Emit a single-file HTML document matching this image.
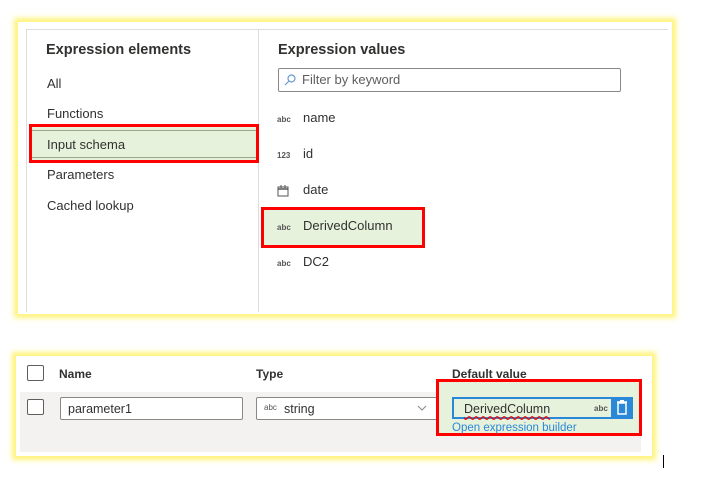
<!DOCTYPE html>
<html><head><meta charset="utf-8"><style>
*{box-sizing:border-box;margin:0;padding:0}
body{width:710px;height:484px;background:#fff;position:relative;overflow:hidden;font-family:"Liberation Sans",sans-serif;color:#323130}
.a{position:absolute}
.glow{box-shadow:0 0 5px 4px #fff37a;background:#fff}
.t{font-size:13px;white-space:nowrap;line-height:16px}
.h{font-size:14.5px;font-weight:bold;color:#323130}
.ic{font-size:8px;color:#555;font-weight:bold}
</style></head><body>
<div class="a glow" style="left:18px;top:22px;width:654px;height:292px"></div>
<div class="a" style="left:26px;top:29px;width:642px;height:1px;background:#ddd"></div>
<div class="a" style="left:26px;top:29px;width:1px;height:283px;background:#ddd"></div>
<div class="a" style="left:258px;top:30px;width:1px;height:282px;background:#ddd"></div>
<div class="a t h" style="left:46px;top:42px">Expression elements</div>
<div class="a t" style="left:47px;top:76px">All</div>
<div class="a t" style="left:47px;top:106px">Functions</div>
<div class="a" style="left:29px;top:124px;width:230px;height:39px;border:3px solid #f00;background:#e6f2dc"></div>
<div class="a" style="left:32px;top:130px;width:224px;height:28px;border-top:1px solid #9aa88a;border-bottom:1px solid #9aa88a"></div>
<div class="a t" style="left:47px;top:137px">Input schema</div>
<div class="a t" style="left:47px;top:167px">Parameters</div>
<div class="a t" style="left:47px;top:198px">Cached lookup</div>
<div class="a t h" style="left:278px;top:42px">Expression values</div>
<div class="a" style="left:278px;top:68px;width:343px;height:24px;border:1px solid #8a8886;border-radius:2px"></div>
<svg class="a" style="left:284px;top:74px" width="12" height="12"><circle cx="7.5" cy="4.5" r="3.5" fill="none" stroke="#6b9bd1" stroke-width="1.2"/><line x1="5" y1="7" x2="1" y2="11" stroke="#6b9bd1" stroke-width="1.2"/></svg>
<div class="a t" style="left:302px;top:72px;color:#605e5c">Filter by keyword</div>
<div class="a ic" style="left:277px;top:115px">abc</div><div class="a t" style="left:303px;top:110px">name</div>
<div class="a ic" style="left:277px;top:151px">123</div><div class="a t" style="left:303px;top:146px">id</div>
<svg class="a" style="left:277px;top:185px" width="12" height="12"><rect x="1" y="2" width="10" height="9" fill="none" stroke="#555"/><line x1="1" y1="4" x2="11" y2="4" stroke="#555" stroke-width="1.5"/><line x1="4" y1="0" x2="4" y2="3" stroke="#555"/><line x1="8" y1="0" x2="8" y2="3" stroke="#555"/></svg>
<div class="a t" style="left:303px;top:182px">date</div>
<div class="a" style="left:261px;top:207px;width:164px;height:41px;border:3px solid #f00;background:#e6f2dc"></div>
<div class="a ic" style="left:277px;top:223px">abc</div><div class="a t" style="left:303px;top:218px">DerivedColumn</div>
<div class="a ic" style="left:277px;top:259px">abc</div><div class="a t" style="left:303px;top:254px">DC2</div>

<div class="a glow" style="left:16px;top:356px;width:636px;height:100px"></div>
<div class="a" style="left:20px;top:392px;width:621px;height:60px;background:#f3f2f1"></div>
<div class="a" style="left:27px;top:365px;width:17px;height:16px;border:1px solid #605e5c;border-radius:2px;background:#fff"></div>
<div class="a t" style="left:59px;top:366px;font-weight:bold;font-size:12px">Name</div>
<div class="a t" style="left:256px;top:366px;font-weight:bold;font-size:12px">Type</div>
<div class="a t" style="left:452px;top:366px;font-weight:bold;font-size:12px">Default value</div>
<div class="a" style="left:27px;top:399px;width:17px;height:16px;border:1px solid #605e5c;border-radius:2px;background:#fff"></div>
<div class="a" style="left:60px;top:397px;width:183px;height:23px;border:1px solid #8a8886;border-radius:2px;background:#fff"></div>
<div class="a t" style="left:68px;top:401px;font-size:12.5px">parameter1</div>
<div class="a" style="left:256px;top:397px;width:183px;height:23px;border:1px solid #8a8886;border-radius:2px;background:#fff"></div>
<div class="a ic" style="left:264px;top:403px;font-weight:normal">abc</div>
<div class="a t" style="left:284px;top:401px;font-size:12.5px">string</div>
<svg class="a" style="left:417px;top:404px" width="10" height="8"><polyline points="1,2 5,6 9,2" fill="none" stroke="#888"/></svg>
<div class="a" style="left:436px;top:379px;width:206px;height:57px;border:3px solid #f00;background:#e6f2dc"></div>
<div class="a" style="left:452px;top:397px;width:181px;height:22px;border:2px solid #2b88d8;background:#e6f2dc"></div>
<div class="a t" style="left:464px;top:401px;font-size:12.5px;text-decoration:underline wavy #e00;text-underline-offset:2px">DerivedColumn</div>
<div class="a ic" style="left:594px;top:404px">abc</div>
<div class="a" style="left:611px;top:397px;width:22px;height:22px;background:#2b88d8"></div>
<svg class="a" style="left:615px;top:399px" width="14" height="18"><rect x="3" y="4" width="8" height="11" fill="none" stroke="#fff" stroke-width="1.5"/><line x1="2" y1="3" x2="12" y2="3" stroke="#fff" stroke-width="1.5"/><rect x="5" y="1" width="4" height="2" fill="#fff"/></svg>
<div class="a t" style="left:452px;top:420px;font-size:11.5px;color:#2b88d8">Open expression builder</div>
<div class="a" style="left:663px;top:455px;width:1px;height:13px;background:#000"></div>
</body></html>
